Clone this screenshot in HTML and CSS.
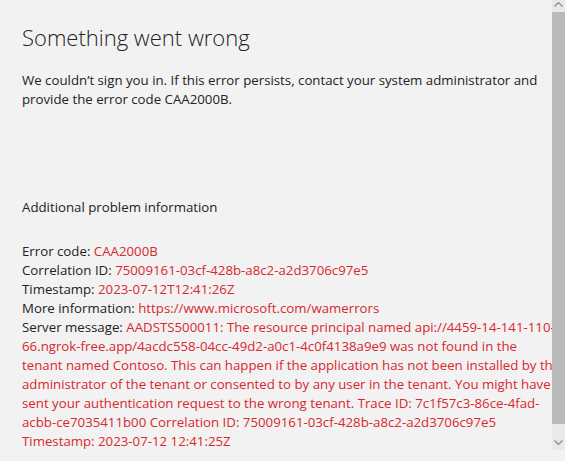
FILE: index.html
```html
<!DOCTYPE html>
<html lang="en">
<head>
<meta charset="utf-8">
<title>Something went wrong</title>
<link rel="stylesheet" href="styles.css">
</head>
<body>
<div class="window">
  <main class="content">
    <div class="inner">
      <h1 class="title">Something went wrong</h1>
      <p class="intro">We couldn’t sign you in. If this error persists, contact your system administrator and provide the error code CAA2000B.</p>
      <h2 class="subtitle">Additional problem information</h2>
      <div class="details">
        <div>Error code: <span class="err">CAA2000B</span></div>
        <div>Correlation ID: <span class="err">75009161-03cf-428b-a8c2-a2d3706c97e5</span></div>
        <div>Timestamp: <span class="err">2023-07-12T12:41:26Z</span></div>
        <div>More information: <span class="err">https://www.microsoft.com/wamerrors</span></div>
        <div class="server">Server message: <span class="err">AADSTS500011: The resource principal named api://4459-14-141-110-<br>66.ngrok-free.app/4acdc558-04cc-49d2-a0c1-4c0f4138a9e9 was not found in the<br>tenant named Contoso. This can happen if the application has not been installed by the<br>administrator of the tenant or consented to by any user in the tenant. You might have<br>sent your authentication request to the wrong tenant. Trace ID: 7c1f57c3-86ce-4fad-<br>acbb-ce7035411b00 Correlation ID: 75009161-03cf-428b-a8c2-a2d3706c97e5<br>Timestamp: 2023-07-12 12:41:25Z</span></div>
      </div>
    </div>
  </main>
  <div class="scrollbar">
    <div class="arrow up"><svg width="9" height="5" viewBox="0 0 9 5"><path d="M0.5 4.5 L4.5 0.5 L8.5 4.5" fill="none" stroke="#8a8a8a" stroke-width="1.2"/></svg></div>
    <div class="thumb"></div>
    <div class="arrow down"><svg width="9" height="5" viewBox="0 0 9 5"><path d="M0.5 0.5 L4.5 4.5 L8.5 0.5" fill="none" stroke="#8a8a8a" stroke-width="1.2"/></svg></div>
  </div>
</div>
</body>
</html>
```

FILE: styles.css
```css
html, body {
  margin: 0;
  padding: 0;
  background: #f2f2f2;
}
body {
  font-family: "Open Sans", "Noto Sans", sans-serif;
  color: #222222;
}
.window {
  display: flex;
  width: 565px;
  height: 461px;
  overflow: hidden;
}
.content {
  width: 552px;
  height: 461px;
  overflow: hidden;
  flex: none;
}
.inner {
  width: 545px;
  padding-left: 22px;
}
.title {
  margin: 0;
  padding-top: 22px;
  font-size: 22px;
  font-weight: 300;
  line-height: 30px;
}
.intro {
  margin: 19px 0 0;
  font-size: 13.25px;
  line-height: 19px;
}
.subtitle {
  margin: 89px 0 0;
  font-size: 13.25px;
  font-weight: 400;
  line-height: 19px;
}
.details {
  margin-top: 25px;
  font-size: 13.25px;
  line-height: 19px;
}
.server {
  white-space: nowrap;
}
.err {
  color: #d9282e;
}
.scrollbar {
  width: 13px;
  height: 450px;
  flex: none;
  background: #e9e9e9;
  display: flex;
  flex-direction: column;
}
.arrow {
  display: flex;
  align-items: flex-start;
  justify-content: center;
}
.arrow.up {
  height: 12px;
  padding-top: 2px;
  box-sizing: border-box;
}
.arrow.down {
  height: 26px;
  padding-top: 16px;
  box-sizing: border-box;
}
.thumb {
  flex: 1;
  background: #b9b9b9;
}
```
